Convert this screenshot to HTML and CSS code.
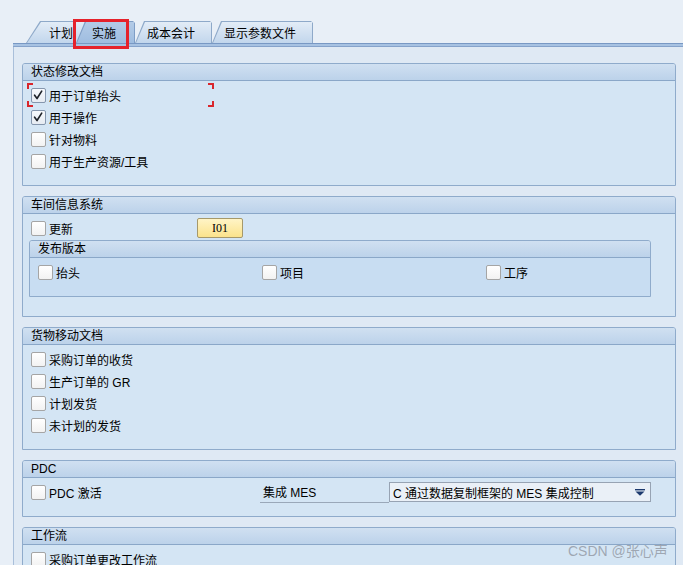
FILE: index.html
```html
<!DOCTYPE html>
<html lang="zh">
<head>
<meta charset="utf-8">
<title>实施</title>
<link rel="stylesheet" href="styles.css">
</head>
<body>
<div class="page">
  <div class="tabstrip">
    <div class="tabs">
      <div class="tab first"><div class="tab-in">计划</div></div>
      <div class="tab active"><div class="tab-in">实施</div></div>
      <div class="tab cost"><div class="tab-in">成本会计</div></div>
      <div class="tab disp"><div class="tab-in">显示参数文件</div></div>
    </div>
    <div class="band"></div>
    <div class="panel">

      <div class="group g1">
        <div class="ghead">状态修改文档</div>
        <div class="gbody">
          <div class="row focus"><span class="cb on"><svg viewBox="0 0 15 15" width="13" height="13"><path d="M3 7.2 L5.8 11 L11.2 2.5" fill="none" stroke="#1f2329" stroke-width="1.9" stroke-linecap="round" stroke-linejoin="round"/></svg></span><span class="lbl">用于订单抬头</span></div>
          <div class="row"><span class="cb on"><svg viewBox="0 0 15 15" width="13" height="13"><path d="M3 7.2 L5.8 11 L11.2 2.5" fill="none" stroke="#1f2329" stroke-width="1.9" stroke-linecap="round" stroke-linejoin="round"/></svg></span><span class="lbl">用于操作</span></div>
          <div class="row"><span class="cb"></span><span class="lbl">针对物料</span></div>
          <div class="row"><span class="cb"></span><span class="lbl">用于生产资源/工具</span></div>
        </div>
      </div>

      <div class="group g2">
        <div class="ghead">车间信息系统</div>
        <div class="gbody">
          <div class="row">
            <div class="cell c-update"><span class="cb"></span><span class="lbl">更新</span></div>
            <span class="btn">I01</span>
          </div>
          <div class="group inner">
            <div class="ghead">发布版本</div>
            <div class="gbody">
              <div class="row cols3">
                <div class="cell"><span class="cb"></span><span class="lbl">抬头</span></div>
                <div class="cell"><span class="cb"></span><span class="lbl">项目</span></div>
                <div class="cell"><span class="cb"></span><span class="lbl">工序</span></div>
              </div>
            </div>
          </div>
        </div>
      </div>

      <div class="group g3">
        <div class="ghead">货物移动文档</div>
        <div class="gbody">
          <div class="row"><span class="cb"></span><span class="lbl">采购订单的收货</span></div>
          <div class="row"><span class="cb"></span><span class="lbl">生产订单的 GR</span></div>
          <div class="row"><span class="cb"></span><span class="lbl">计划发货</span></div>
          <div class="row"><span class="cb"></span><span class="lbl">未计划的发货</span></div>
        </div>
      </div>

      <div class="group g4">
        <div class="ghead">PDC</div>
        <div class="gbody">
          <div class="row">
            <div class="cell c-pdc"><span class="cb"></span><span class="lbl">PDC 激活</span></div>
            <div class="fieldlabel">集成 MES</div>
            <div class="dropdown">
              <span class="ddtext">C 通过数据复制框架的 MES 集成控制</span>
              <svg class="ddarrow" viewBox="0 0 10 7" width="10" height="7"><rect x="0" y="0" width="10" height="1.4" fill="#1d3a6e"/><polygon points="0.5,2.4 9.5,2.4 5,6.8" fill="#1d3a6e"/></svg>
            </div>
          </div>
        </div>
      </div>

      <div class="group g5">
        <div class="ghead">工作流</div>
        <div class="gbody">
          <div class="row"><span class="cb"></span><span class="lbl">采购订单更改工作流</span></div>
        </div>
      </div>

    </div>
  </div>
  <div class="annot"></div>
  <div class="watermark">CSDN @张心声</div>
</div>
</body>
</html>
```

FILE: styles.css
```css
html, body {
  margin: 0;
  padding: 0;
  background: #e8eff7;
  font-family: "Liberation Sans", "Noto Sans CJK SC", sans-serif;
  font-size: 12px;
  color: #000;
}

.page {
  position: relative;
  height: 565px;
  overflow: hidden;
  padding-top: 21px;
  box-sizing: border-box;
}

.tabstrip {
  margin-left: 13px;
}

.tabs {
  display: flex;
  height: 22px;
  padding-left: 13px;
}

.tab {
  height: 22px;
  box-sizing: border-box;
  padding: 1px 1px 0 1px;
  background: #8ea9c9;
  clip-path: polygon(0 100%, 9px 0, calc(100% - 2px) 0, 100% 2px, 100% 100%);
}

.tab-in {
  height: 100%;
  display: flex;
  align-items: center;
  padding-left: 11px;
  background: linear-gradient(#e2ecf7, #c2d6ec);
  clip-path: polygon(0 100%, 9px 0, 100% 0, 100% 100%);
  box-sizing: border-box;
}

.tab.first {
  width: 60px;
  clip-path: polygon(0 100%, 14px 0, calc(100% - 2px) 0, 100% 2px, 100% 100%);
}
.tab.first .tab-in {
  padding-left: 22px;
  clip-path: polygon(0 100%, 14px 0, 100% 0, 100% 100%);
}

.tab.active {
  width: 59px;
  margin-left: -10px;
  background: #7f9ec6;
}
.tab.active .tab-in {
  padding-left: 15px;
  background: linear-gradient(#b3cbe7, #9fbde0);
}

.tab.cost {
  width: 77px;
}
.tab.disp {
  width: 101px;
}

.band {
  height: 2px;
  border-top: 1px solid #7898c4;
  border-bottom: 1px solid #86a3cb;
  background: #a7c2e2;
}

.panel {
  background: #dfe9f4;
  border-left: 1px solid #a9bfda;
  padding: 16px 0 0 8px;
  height: 520px;
}

.group {
  width: 654px;
  box-sizing: border-box;
  border: 1px solid #8fabcb;
  border-radius: 3px 3px 0 0;
  background: #d4e5f4;
  margin-bottom: 10px;
}

.ghead {
  height: 16px;
  line-height: 16px;
  padding-left: 8px;
  border-bottom: 1px solid #8aa7c8;
  background: linear-gradient(#d0e0f1, #bcd2ea);
  border-radius: 2px 2px 0 0;
}

.gbody {
  padding: 3px 8px 13px 8px;
}

.row {
  display: flex;
  align-items: center;
  height: 22px;
}

.cell {
  display: flex;
  align-items: center;
}

.cb {
  width: 15px;
  height: 15px;
  box-sizing: border-box;
  border: 1px solid #a5a5a5;
  border-radius: 2px;
  background: linear-gradient(#ffffff, #f2f2f2);
  display: flex;
  align-items: center;
  justify-content: center;
  flex: none;
}

.cb.on {
  border-color: #8596ad;
  background: linear-gradient(#f7f9fc, #e6ebf2);
}

.lbl {
  margin-left: 3px;
  white-space: nowrap;
}

.focus {
  position: relative;
}
.focus::before {
  content: "";
  position: absolute;
  left: -4px;
  top: -1px;
  width: 187px;
  height: 24px;
  background:
    linear-gradient(#d9262c, #d9262c) left top / 6px 2px no-repeat,
    linear-gradient(#d9262c, #d9262c) left top / 2px 6px no-repeat,
    linear-gradient(#d9262c, #d9262c) right top / 6px 2px no-repeat,
    linear-gradient(#d9262c, #d9262c) right top / 2px 6px no-repeat,
    linear-gradient(#d9262c, #d9262c) left bottom / 6px 2px no-repeat,
    linear-gradient(#d9262c, #d9262c) left bottom / 2px 6px no-repeat,
    linear-gradient(#d9262c, #d9262c) right bottom / 6px 2px no-repeat,
    linear-gradient(#d9262c, #d9262c) right bottom / 2px 6px no-repeat;
}

.c-update {
  width: 166px;
}

.btn {
  width: 46px;
  height: 20px;
  box-sizing: border-box;
  border: 1px solid #a6996a;
  border-radius: 2px;
  background: linear-gradient(#fff4c6, #fbe38c);
  display: flex;
  align-items: center;
  justify-content: center;
  font-family: "Liberation Serif", serif;
  font-size: 12px;
}

.group.inner {
  width: 622px;
  margin: 1px 0 0 -2px;
  background: #c8ddf2;
}
.group.inner .gbody {
  padding: 3px 8px 13px 8px;
}
.g2 > .gbody {
  padding-bottom: 19px;
}

.cols3 {
  display: grid;
  grid-template-columns: 224px 224px 150px;
}

.c-pdc {
  width: 229px;
}

.fieldlabel {
  width: 129px;
  height: 19px;
  box-sizing: border-box;
  padding-left: 3px;
  line-height: 18px;
  border-bottom: 1px solid #9aa8b9;
  margin-top: 2px;
}

.dropdown {
  width: 262px;
  height: 20px;
  box-sizing: border-box;
  border: 1px solid #97a3b3;
  background: #eaf0f7;
  display: flex;
  align-items: center;
  justify-content: space-between;
  padding: 0 5px 0 3px;
}

.ddtext {
  white-space: nowrap;
}

.annot {
  position: absolute;
  left: 73px;
  top: 19px;
  width: 56px;
  height: 30px;
  box-sizing: border-box;
  border: 3px solid #e5222b;
}

.watermark {
  position: absolute;
  left: 568px;
  top: 540px;
  font-size: 14px;
  color: rgba(140, 146, 156, 0.75);
  white-space: nowrap;
}
```
